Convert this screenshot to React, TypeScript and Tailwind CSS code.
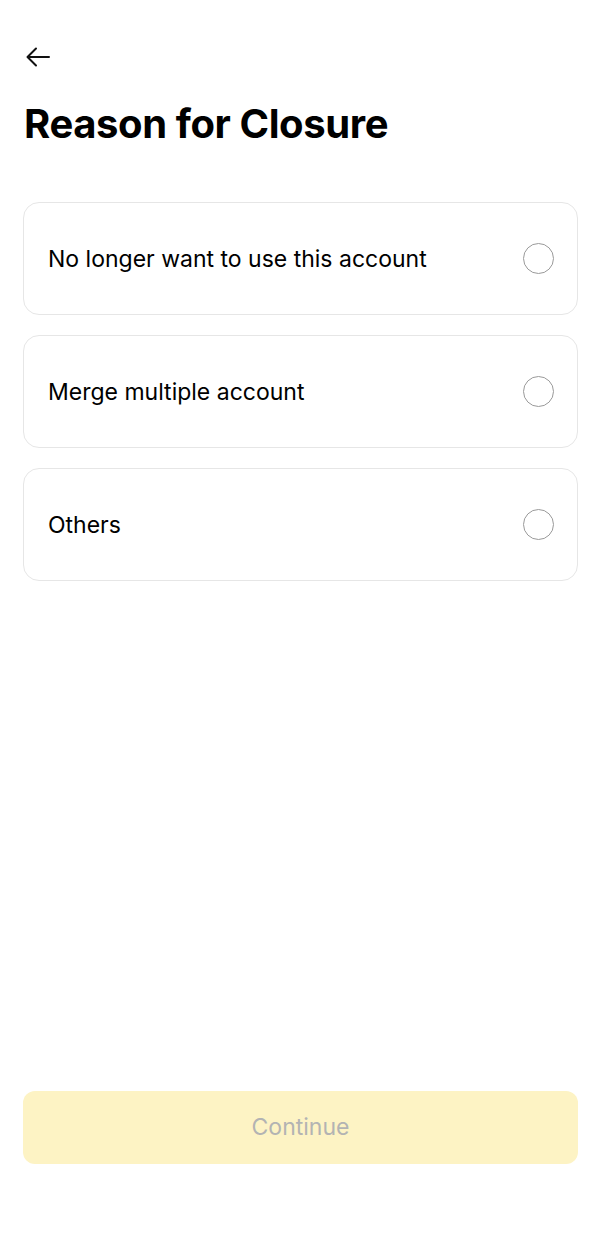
import { useState } from "react";

const reasons = [
  "No longer want to use this account",
  "Merge multiple account",
  "Others",
];

const App = () => {
  const [selected, setSelected] = useState<number | null>(null);

  return (
    <div
      className="flex flex-col w-full min-h-[1238px] bg-white pl-[23px] pr-[22px] text-black"
      style={{ fontFamily: "Inter, 'Open Sans', sans-serif" }}
    >
      <div className="h-[100px] flex items-start pt-[44px] pl-[2px]">
        <button className="w-[26px] h-[26px] flex items-center justify-center">
          <svg width="26" height="26" viewBox="0 0 26 26" fill="none">
            <path
              d="M24 13H3M11 4.5L2.5 13L11 21.5"
              stroke="#111"
              strokeWidth="2"
              strokeLinecap="round"
              strokeLinejoin="round"
            />
          </svg>
        </button>
      </div>

      <h1 className="text-[40px] leading-[48px] font-bold tracking-[-0.4px] pl-px">
        Reason for Closure
      </h1>

      <div className="flex flex-col gap-[20px] mt-[54px]">
        {reasons.map((r, i) => (
          <button
            key={r}
            onClick={() => setSelected(i)}
            className="flex items-center justify-between h-[113px] border border-[#e6e6e6] rounded-[16px] pl-[24px] pr-[23px] text-left"
          >
            <span className="text-[23px] leading-[28px]">{r}</span>
            <span
              className={
                selected === i
                  ? "w-[31px] h-[31px] rounded-full border-[9px] border-[#fe2c55]"
                  : "w-[31px] h-[31px] rounded-full border-[1.5px] border-[#9a9a9a]"
              }
            />
          </button>
        ))}
      </div>

      <div className="flex-1" />

      <button
        className={
          selected === null
            ? "h-[73px] rounded-[12px] bg-[#fdf3c4] text-[#b3b3b3] text-[23px] mb-[74px]"
            : "h-[73px] rounded-[12px] bg-[#fcd535] text-black text-[23px] mb-[74px]"
        }
      >
        Continue
      </button>
    </div>
  );
};

export default App;
